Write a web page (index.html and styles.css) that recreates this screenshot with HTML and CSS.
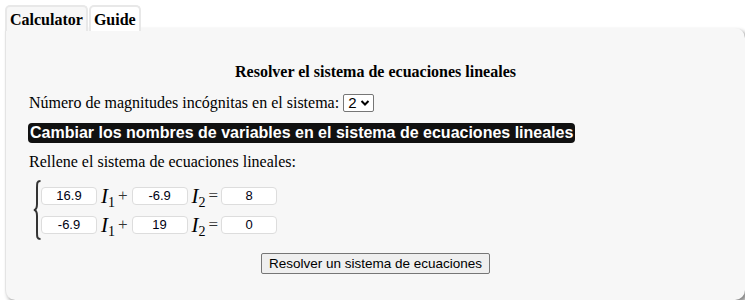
FILE: index.html
```html
<!DOCTYPE html>
<html>
<head>
<meta charset="utf-8">
<link rel="stylesheet" href="styles.css">
</head>
<body>
<div class="tabs">
  <div class="tab active">Calculator</div>
  <div class="tab">Guide</div>
</div>
<div class="panel">
  <h3 class="title">Resolver el sistema de ecuaciones lineales</h3>
  <div class="row">Número de magnitudes incógnitas en el sistema: <span class="select">2<svg width="10" height="8" viewBox="0 0 10 8"><path d="M1.5 2 L5 5.5 L8.5 2" fill="none" stroke="#000" stroke-width="2"/></svg></span></div>
  <div class="rename"><span>Cambiar los nombres de variables en el sistema de ecuaciones lineales</span></div>
  <div class="row fill">Rellene el sistema de ecuaciones lineales:</div>
  <div class="system">
    <svg class="brace" width="8" height="60" viewBox="0 0 8 60"><path d="M7.5 1 C4 1 4 3 4 8 L4 24 C4 28 3 30 0.8 30 C3 30 4 32 4 36 L4 52 C4 57 4 59 7.5 59" fill="none" stroke="#333" stroke-width="2"/></svg>
    <div class="eqs">
      <div class="eq">
        <span class="inp">16.9</span><span class="var">I<sub>1</sub></span><span class="op">+</span>
        <span class="inp">-6.9</span><span class="var">I<sub>2</sub></span><span class="op eqsign">=</span>
        <span class="inp">8</span>
      </div>
      <div class="eq">
        <span class="inp">-6.9</span><span class="var">I<sub>1</sub></span><span class="op">+</span>
        <span class="inp">19</span><span class="var">I<sub>2</sub></span><span class="op eqsign">=</span>
        <span class="inp">0</span>
      </div>
    </div>
  </div>
  <div class="actions"><span class="btn">Resolver un sistema de ecuaciones</span></div>
</div>
</body>
</html>
```
FILE: styles.css
```css
html, body { margin: 0; padding: 0; background: #fff; }
body { font-family: "Liberation Serif", "Times New Roman", serif; font-size: 16px; color: #000; padding: 5px 0 0 5px; width: 740px; }
.tabs { display: flex; gap: 1px; height: 24px; position: relative; z-index: 1; }
.tab { font-weight: bold; font-size: 16px; padding: 4px 3px 0 3px; border: 2px solid #e8e8e8; border-bottom: none; border-radius: 5px 5px 0 0; background: #fff; height: 20px; line-height: 18px; }
.tab.active { background: #f7f7f7; }
.panel { background: #f7f7f7; border-radius: 0 10px 10px 10px; box-shadow: 3px 3px 4px #888; margin-top: -1px; width: 740px; height: 272px; box-sizing: border-box; padding: 1px 0 0 0; border-left: 1px solid #e4e4e4; }
.title { font-size: 16px; font-weight: bold; text-align: center; margin: 34px 0 0 0; line-height: 18px; }
.row { margin: 12px 0 0 23px; line-height: 20px; display: flex; align-items: center; }
.select { display: inline-flex; align-items: center; gap: 3px; border: 1px solid #767676; border-radius: 2px; background: #fff; height: 18px; box-sizing: border-box; padding: 0 3px 0 4px; font-family: "Liberation Sans", Arial, sans-serif; font-size: 15px; margin-left: 4px; }
.rename { margin: 10px 0 0 22px; }
.rename span { display: inline-block; background: #111; color: #fff; font-family: "Liberation Sans", Arial, sans-serif; font-weight: bold; font-size: 16px; line-height: 20px; padding: 0 2px; border-radius: 4px; }
.fill { margin-top: 9px; }
.system { display: flex; align-items: center; margin: 8px 0 0 27px; }
.brace { display: block; margin-right: 0; }
.eqs { display: flex; flex-direction: column; gap: 11px; }
.eq { display: flex; align-items: center; height: 18px; }
.inp { display: inline-block; width: 56px; height: 18px; box-sizing: border-box; border: 1px solid #ddd; border-radius: 4px; background: #fff; font-family: "Liberation Sans", Arial, sans-serif; font-size: 13px; line-height: 16px; text-align: center; color: #001; }
.var { font-style: italic; font-size: 21px; margin: 0 1px 0 4px; line-height: 20px; }
.var sub { font-style: normal; font-size: 14px; vertical-align: -4px; line-height: 0; }
.op { font-size: 17px; color: #333; margin: 0 4px 0 2px; }
.op.eqsign { margin-left: 2px; margin-right: 3px; }
.actions { display: flex; justify-content: center; margin-top: 13px; }
.btn { display: inline-block; font-family: "Liberation Sans", Arial, sans-serif; font-size: 13.5px; border: 1px solid #767676; border-radius: 2px; background: #efefef; padding: 1px 7px; line-height: 17px; }
```
